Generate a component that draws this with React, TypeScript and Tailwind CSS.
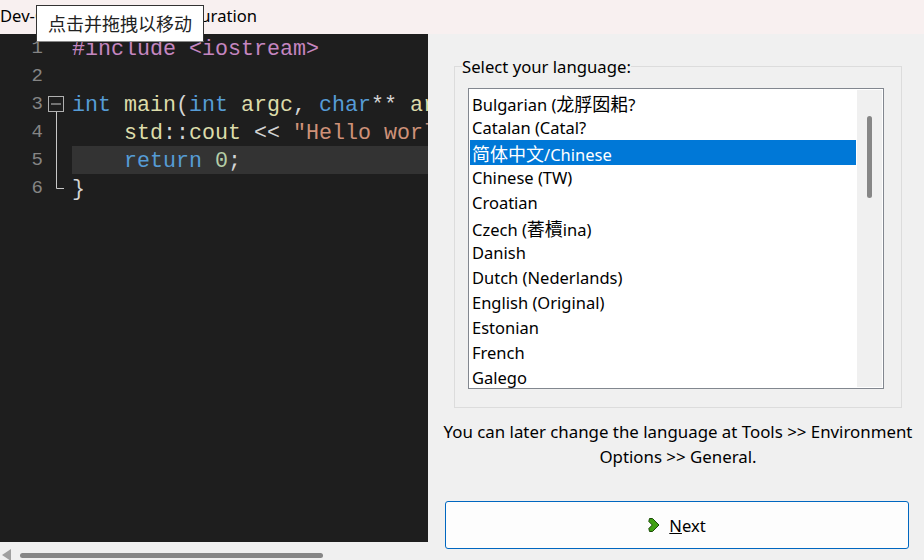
import type { ReactNode } from "react";

function Cjk({ children }: { children: ReactNode }) {
  return <span className="text-[18px] font-['Noto_Sans_CJK_SC',sans-serif]">{children}</span>;
}

const LANGS: ReactNode[] = [
  <>
    Bulgarian (<Cjk>龙脬囡耜</Cjk>?
  </>,
  "Catalan (Catal?",
  <>
    <Cjk>简体中文</Cjk>/Chinese
  </>,
  "Chinese (TW)",
  "Croatian",
  <>
    Czech (<Cjk>萫櫝</Cjk>ina)
  </>,
  "Danish",
  "Dutch (Nederlands)",
  "English (Original)",
  "Estonian",
  "French",
  "Galego",
];

const kw = "text-[#569cd6]";
const fn = "text-[#dcdcaa]";
const pp = "text-[#c586c0]";
const str = "text-[#ce9178]";
const num = "text-[#b5cea8]";
const txt = "text-[#d4d4d4]";

const CODE: ReactNode[] = [
  <span className={pp}>#include &lt;iostream&gt;</span>,
  "",
  <>
    <span className={kw}>int</span> <span className={fn}>main</span>
    <span className={txt}>(</span>
    <span className={kw}>int</span> <span className={fn}>argc</span>
    <span className={txt}>, </span>
    <span className={kw}>char</span>
    <span className={txt}>** </span>
    <span className={fn}>argv</span>
  </>,
  <>
    {"    "}
    <span className={fn}>std</span>
    <span className={txt}>::</span>
    <span className={fn}>cout</span>
    <span className={txt}> &lt;&lt; </span>
    <span className={str}>"Hello world"</span>
  </>,
  <>
    {"    "}
    <span className={kw}>return</span> <span className={num}>0</span>
    <span className={txt}>;</span>
  </>,
  <span className={txt}>{"}"}</span>,
];

function FoldGutter({ line }: { line: number }) {
  if (line === 2) {
    return (
      <svg width="16" height="28" viewBox="0 0 16 28" className="block">
        <rect x="0.5" y="6.5" width="15" height="15" fill="none" stroke="#b0b0b0" />
        <path d="M3 14H13M8.5 22V28" stroke="#c8c8c8" fill="none" />
      </svg>
    );
  }
  if (line === 3 || line === 4) {
    return (
      <svg width="16" height="28" viewBox="0 0 16 28" className="block">
        <path d="M8.5 0V28" stroke="#c8c8c8" fill="none" />
      </svg>
    );
  }
  if (line === 5) {
    return (
      <svg width="16" height="28" viewBox="0 0 16 28" className="block">
        <path d="M8.5 0V14.5H16" stroke="#c8c8c8" fill="none" />
      </svg>
    );
  }
  return <div className="w-4 h-7" />;
}

function Editor() {
  return (
    <div className="flex-1 min-h-0 bg-[#1e1e1e] overflow-hidden font-['Liberation_Mono',monospace] text-[21.67px]">
      {CODE.map((line, i) => (
        <div key={i} className="flex h-7">
          <div className="w-[45px] shrink-0 pr-0.5 text-right text-[19px] leading-7 text-[#858585]">{i + 1}</div>
          <div className="w-[27px] shrink-0 pl-[3px]">
            <FoldGutter line={i} />
          </div>
          <div className={`flex-1 h-7 leading-[32px] whitespace-pre ${i === 4 ? "bg-[#333333]" : ""}`}>{line}</div>
        </div>
      ))}
    </div>
  );
}

function LanguageList() {
  return (
    <div className="relative ml-[13px] mr-[17px] mt-[21px] h-[301px] border border-[#82878f] bg-white pl-px pt-px overflow-hidden">
      <div className="w-[386px] text-[16.5px]">
        {LANGS.map((lang, i) => (
          <div
            key={i}
            className={`h-[25px] pl-0.5 leading-[26px] whitespace-nowrap ${
              i === 2 ? "bg-[#0078d7] text-white" : "text-black"
            }`}
          >
            {lang}
          </div>
        ))}
      </div>
      {/* list scrollbar */}
      <div className="absolute right-px top-px bottom-px w-[25px] bg-[#f0f0f0]">
        <div className="absolute left-[10px] top-[26px] h-[82px] w-[5px] rounded-full bg-[#868686]" />
      </div>
    </div>
  );
}

export default function App() {
  return (
    <div className="relative flex h-[560px] w-[924px] flex-col overflow-hidden bg-[#f0f0f0] font-['Noto_Sans','Noto_Sans_CJK_SC',sans-serif] text-black">
      <div className="h-[34px] shrink-0 bg-[#f8f0f0] pt-1 text-[16.6px] leading-6 whitespace-nowrap">
        Dev-C++ First Time Configuration
      </div>

      <div className="flex flex-1 min-h-0">
        <div className="flex w-[428px] shrink-0 flex-col">
          <Editor />

          {/* bottom scrollbar */}
          <div className="flex h-[18px] shrink-0 items-center gap-[9px] overflow-hidden pl-0.5 pt-2">
            <svg width="9" height="12" viewBox="0 0 9 12" className="shrink-0">
              <path d="M9 0V12L0 6Z" fill="#a0a0a0" />
            </svg>
            <div className="h-[5px] w-[303px] rounded-full bg-[#868686]" />
          </div>
        </div>

        <div className="flex min-w-0 flex-1 flex-col">
          {/* group box */}
          <div className="relative ml-[26px] mr-[22px] mt-8 h-[342px] shrink-0 border border-[#dcdcdc]">
            <span className="absolute left-[7px] -top-[10px] bg-[#f0f0f0] text-[16.7px] leading-5">
              Select your language:
            </span>
            <LanguageList />
          </div>

          <p className="mt-[11px] shrink-0 pl-1 text-center text-[16.85px] leading-[25px] whitespace-nowrap">
            You can later change the language at Tools &gt;&gt; Environment
            <br />
            Options &gt;&gt; General.
          </p>

          <button className="ml-[17px] mr-[15px] mt-8 flex h-[48px] shrink-0 items-center justify-center gap-[7px] rounded-[3px] border border-[#0067c0] bg-[#fdfdfd] text-[16.6px]">
            <svg width="12" height="16" viewBox="0 0 12 16">
              <path d="M1.5 1.5H4.5L11 8L4.5 14.5H1.5L0.8 11.5L4.3 8L0.8 4.5Z" fill="#3fa012" stroke="#1c4a0a" strokeWidth="1" />
            </svg>
            <span className="pl-0.5 pt-[3px]">
              <span className="underline">N</span>ext
            </span>
          </button>
        </div>
      </div>

      {/* drag tooltip */}
      <div className="absolute left-9 top-[5px] flex h-[37px] w-[168px] items-center justify-center border border-[#333] border-b-[#888] bg-white font-['Noto_Sans_CJK_SC',sans-serif] text-[18px] text-[#222]">
        点击并拖拽以移动
      </div>
    </div>
  );
}
